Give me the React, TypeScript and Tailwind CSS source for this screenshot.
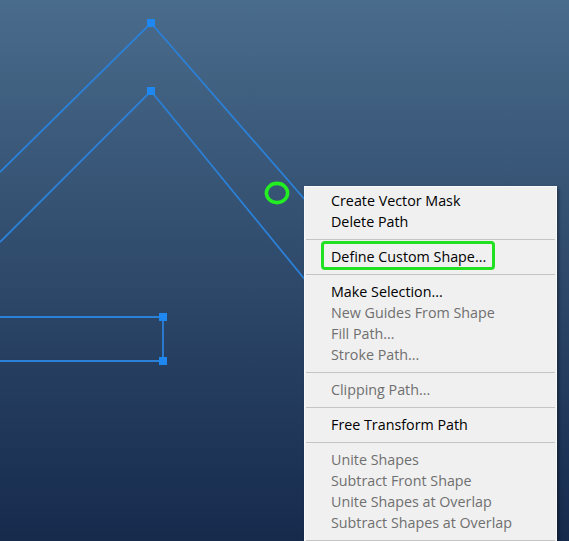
import React from "react";

type Entry = { label: string; disabled?: boolean; highlight?: boolean } | "sep";

const entries: Entry[] = [
  { label: "Create Vector Mask" },
  { label: "Delete Path" },
  "sep",
  { label: "Define Custom Shape...", highlight: true },
  "sep",
  { label: "Make Selection..." },
  { label: "New Guides From Shape", disabled: true },
  { label: "Fill Path...", disabled: true },
  { label: "Stroke Path...", disabled: true },
  "sep",
  { label: "Clipping Path...", disabled: true },
  "sep",
  { label: "Free Transform Path" },
  "sep",
  { label: "Unite Shapes", disabled: true },
  { label: "Subtract Front Shape", disabled: true },
  { label: "Unite Shapes at Overlap", disabled: true },
  { label: "Subtract Shapes at Overlap", disabled: true },
  "sep",
];

function Canvas() {
  const line = "#2b80d8";
  const handle = "#1f87f0";
  return (
    <svg className="absolute inset-0" width={569} height={541} viewBox="0 0 569 541">
      <g fill="none" stroke={line} strokeWidth={1.8}>
        <polyline points="0,172 151,23 320,217" />
        <polyline points="0,242 151,91 320,298" />
        <polyline points="0,317 163,317 163,361 0,361" />
      </g>
      <g fill={handle}>
        <rect x={147} y={19} width={8} height={8} />
        <rect x={147} y={87} width={8} height={8} />
        <rect x={159} y={313} width={8} height={8} />
        <rect x={159} y={357} width={8} height={8} />
      </g>
      <ellipse cx={277} cy={193} rx={10.6} ry={9.6} fill="none" stroke="#22ee22" strokeWidth={3.6} />
    </svg>
  );
}

function ContextMenu() {
  return (
    <div className="absolute left-[304px] top-[186px] w-[253px] border border-[#fafafa] bg-[#f0f0f0] pt-[3px] shadow-[2px_2px_3px_rgba(0,0,0,0.35)]">
      {entries.map((e, i) =>
        e === "sep" ? (
          <div key={i} className="mx-px mt-[7px] mb-[6px] h-px bg-[#c4c4c4]" />
        ) : (
          <div
            key={i}
            className={`relative flex h-[21px] items-center pl-[26px] ${e.disabled ? "text-[#6f6f6f]" : "text-black"}`}
          >
            {e.highlight && (
              <span className="absolute left-[16px] top-[-5px] h-[29px] w-[174px] rounded-[4px] border-[3px] border-[#22e022]" />
            )}
            <span className="relative">{e.label}</span>
          </div>
        )
      )}
    </div>
  );
}

export default function App() {
  return (
    <div
      className="relative h-[541px] w-[569px] overflow-hidden bg-gradient-to-b from-[#4a6c8c] to-[#162a4c] text-[14.3px]"
      style={{ fontFamily: '"Open Sans", "Noto Sans", sans-serif' }}
    >
      <Canvas />
      <ContextMenu />
    </div>
  );
}
